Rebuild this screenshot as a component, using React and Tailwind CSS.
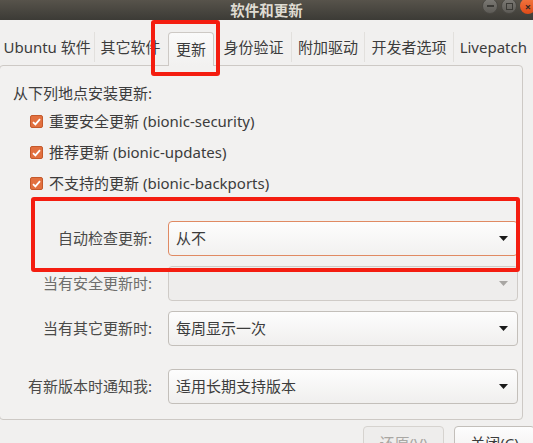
import React from 'react'

const font = { fontFamily: '"Noto Sans", "Noto Sans CJK SC", sans-serif' }

function Check() {
  return (
    <span className="flex h-[13px] w-[13px] items-center justify-center rounded-[2px] border border-[#c4592b] bg-[#e2703f]">
      <svg width="9" height="8" viewBox="0 0 9 8">
        <path d="M1 4.2 L3.4 6.4 L8 1.2" fill="none" stroke="#fff" strokeWidth="1.8" />
      </svg>
    </span>
  )
}

function Arrow({ color = '#1a1a1a' }) {
  return (
    <svg width="9" height="5" viewBox="0 0 9 5">
      <path d="M0 0 H9 L4.5 5 Z" fill={color} />
    </svg>
  )
}

function Combo({ value, focused, disabled }) {
  const cls = disabled
    ? 'border-[#cfcbc7] bg-[#eeedec]'
    : focused
      ? 'border-[#e08a63] bg-gradient-to-b from-[#fdfdfd] to-[#f2f1f0]'
      : 'border-[#c3bfba] bg-gradient-to-b from-[#fdfdfd] to-[#f0efee]'
  return (
    <div className={`flex h-[35px] w-[350px] items-center justify-between rounded-[4px] border pl-[7px] pr-[9px] text-[15px] text-[#3c3c3c] ${cls}`}>
      <span>{value}</span>
      <Arrow color={disabled ? '#a8a6a3' : '#1a1a1a'} />
    </div>
  )
}

function Row({ label, children, muted }) {
  return (
    <div className="flex items-center">
      <div className={`w-[151px] text-right text-[15px] ${muted ? 'text-[#6e6e6c]' : 'text-[#4a4a48]'}`}>{label}</div>
      <div className="ml-[16px]">{children}</div>
    </div>
  )
}

const tabs = [
  { label: 'Ubuntu 软件', w: 95 },
  { label: '其它软件', w: 72 },
  { label: '更新', w: 47, active: true },
  { label: '身份验证', w: 75 },
  { label: '附加驱动', w: 74 },
  { label: '开发者选项', w: 89 },
  { label: 'Livepatch', w: 81 },
]

export default function App() {
  return (
    <div className="relative h-[443px] w-[533px] overflow-hidden bg-[#f1f0ef]" style={font}>
      {/* title bar */}
      <div className="relative flex h-[20px] items-center justify-center bg-gradient-to-b from-[#57534b] to-[#3c3b36]">
        <span className="text-[14.5px] font-bold leading-none text-[#dfdbd2]">软件和更新</span>
        <div className="absolute right-[-3px] top-[-2px] flex gap-[3px]">
          <span className="flex h-[16px] w-[16px] items-center justify-center rounded-full border border-[#4a4843] bg-gradient-to-b from-[#7c7a75] to-[#5d5b56]">
            <span className="h-[1.5px] w-[7px] bg-[#3a3935]" />
          </span>
          <span className="flex h-[16px] w-[16px] items-center justify-center rounded-full border border-[#4a4843] bg-gradient-to-b from-[#7c7a75] to-[#5d5b56]">
            <span className="h-[7px] w-[7px] border border-[#3a3935]" />
          </span>
          <span className="flex h-[16px] w-[16px] items-center justify-center rounded-full bg-gradient-to-b from-[#f3763f] to-[#df4a16] text-[11px] font-bold leading-none text-[#3a2a22]">
            ×
          </span>
        </div>
      </div>

      {/* tabs */}
      <div className="flex h-[45px] items-end pt-[12px]">
        {tabs.map((t, i) => (
          <div
            key={t.label}
            style={{ width: t.w }}
            className={
              t.active
                ? 'z-10 mb-[-1px] mx-[2px] flex h-[34px] items-center justify-center rounded-t-[4px] border border-b-0 border-[#cdc9c5] bg-gradient-to-b from-[#fafafa] to-[#f2f1f0] text-[15px] text-[#3c3c3c]'
                : `flex h-[30px] mb-[3px] items-center justify-center text-[15px] text-[#3c3c3c] ${i > 0 && !tabs[i - 1].active ? 'border-l border-[#e2e0dd]' : ''}`
            }
          >
            {t.label}
          </div>
        ))}
      </div>

      {/* panel */}
      <div className="mr-[10px] ml-[-1px] h-[355px] rounded-[4px] border border-[#cdc9c5] bg-[#f2f1f0] pl-[13px] pt-[17px]">
        <div className="text-[15px] leading-[20px] text-[#3c3c3c]">从下列地点安装更新:</div>
        <div className="mt-[3px] pl-[17px]">
          {['重要安全更新 (bionic-security)', '推荐更新 (bionic-updates)', '不支持的更新 (bionic-backports)'].map(s => (
            <div key={s} className="flex h-[31px] items-center gap-[6px] text-[15px] text-[#3c3c3c]">
              <Check />
              <span>{s}</span>
            </div>
          ))}
        </div>
        <div className="ml-[-12px] mt-[22px] flex flex-col gap-[10px]">
          <Row label="自动检查更新:">
            <Combo value="从不" focused />
          </Row>
          <Row label="当有安全更新时:" muted>
            <Combo value="" disabled />
          </Row>
          <Row label="当有其它更新时:">
            <Combo value="每周显示一次" />
          </Row>
          <div className="mt-[13px]">
            <Row label="有新版本时通知我:">
              <Combo value="适用长期支持版本" />
            </Row>
          </div>
        </div>
      </div>

      {/* buttons */}
      <div className="mt-[6px] flex justify-end gap-[10px]">
        <div className="flex h-[34px] w-[81px] items-center justify-center rounded-[4px] border border-[#d6d3cf] bg-[#eeedec] text-[15px] text-[#a9a7a3]">
          还原(V)
        </div>
        <div className="mr-[-2px] flex h-[34px] w-[81px] items-center justify-center rounded-[4px] border border-[#c3bfba] bg-gradient-to-b from-[#fdfdfd] to-[#f0efee] text-[15px] text-[#3c3c3c]">
          关闭(C)
        </div>
      </div>

      {/* annotation boxes */}
      <div className="pointer-events-none absolute left-[151px] top-[20px] h-[56px] w-[69px] rounded-[3px] border-[4px] border-[#f41d10]" />
      <div className="pointer-events-none absolute left-[31px] top-[197px] h-[75px] w-[489px] rounded-[3px] border-[4px] border-[#f41d10]" />
    </div>
  )
}
